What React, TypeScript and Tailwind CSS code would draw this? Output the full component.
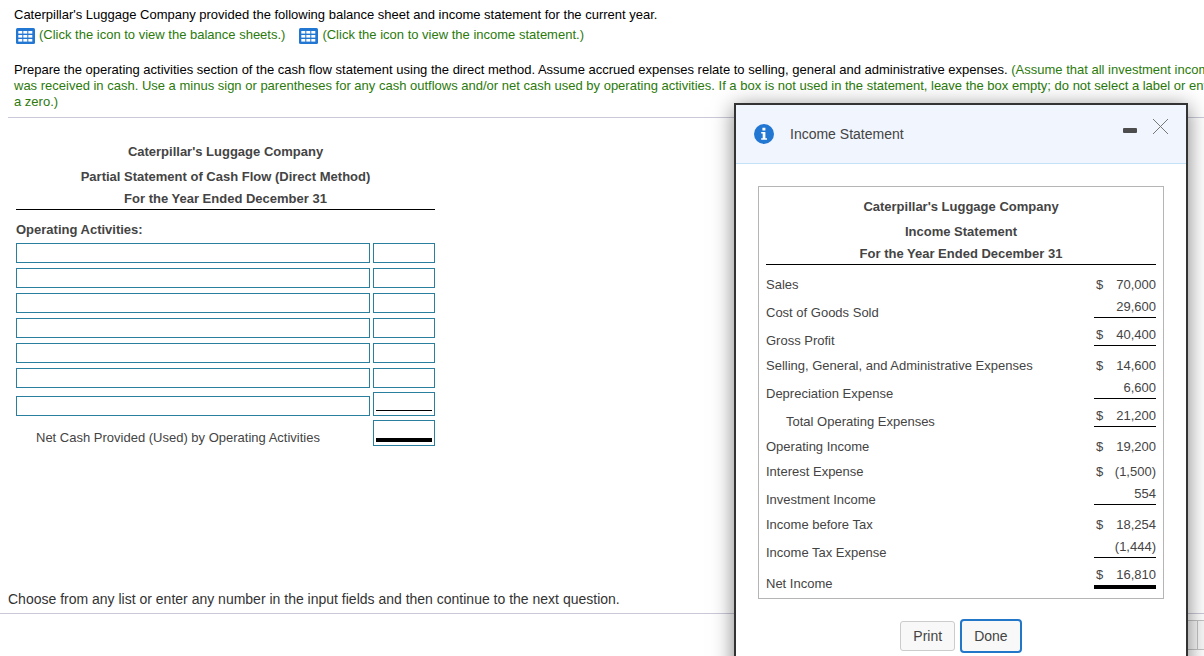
import React from "react";
import clsx from "clsx";

type Rule = "none" | "single" | "double";

type StatementLine = {
  label: string;
  amount: string;
  dollar?: boolean;
  indent?: boolean;
  rule?: Rule;
};

const incomeStatement: StatementLine[] = [
  { label: "Sales", amount: "70,000", dollar: true },
  { label: "Cost of Goods Sold", amount: "29,600", rule: "single" },
  { label: "Gross Profit", amount: "40,400", dollar: true, rule: "single" },
  {
    label: "Selling, General, and Administrative Expenses",
    amount: "14,600",
    dollar: true,
  },
  { label: "Depreciation Expense", amount: "6,600", rule: "single" },
  {
    label: "Total Operating Expenses",
    amount: "21,200",
    dollar: true,
    indent: true,
    rule: "single",
  },
  { label: "Operating Income", amount: "19,200", dollar: true },
  { label: "Interest Expense", amount: "(1,500)", dollar: true },
  { label: "Investment Income", amount: "554", rule: "single" },
  { label: "Income before Tax", amount: "18,254", dollar: true },
  { label: "Income Tax Expense", amount: "(1,444)", rule: "single" },
  { label: "Net Income", amount: "16,810", dollar: true, rule: "double" },
];

const SheetIcon = () => (
  <svg width="19" height="16" viewBox="0 0 19 16" aria-hidden="true">
    <rect width="19" height="16" rx="1.5" fill="#2277d3" />
    <g fill="#fff">
      {[3, 7, 11].map((y) =>
        [2, 7, 12].map((x) => (
          <rect key={`${x}-${y}`} x={x + 0.3} y={y} width="4" height="2.6" />
        ))
      )}
    </g>
  </svg>
);

const InfoIcon = () => (
  <svg width="20" height="20" viewBox="0 0 20 20" aria-hidden="true">
    <circle cx="10" cy="10" r="10" fill="#2277d3" />
    <path
      d="M8.4 3.8h3v2.6h-3zM7.2 8h4.2v6.2h1.6v1.6H7.2v-1.6h1.5V9.6H7.2z"
      fill="#fff"
    />
  </svg>
);

const PopupLink = ({ children }: { children: React.ReactNode }) => (
  <a href="#" className="flex items-start gap-1 text-[#2b7a0b]">
    <span className="pt-px">
      <SheetIcon />
    </span>
    {children}
  </a>
);

const StatementHeading = ({ lines }: { lines: string[] }) => (
  <thead>
    {lines.map((line, index) => (
      <tr key={line}>
        <th colSpan={2} className="p-0 text-center font-bold">
          {index < lines.length - 1 ? (
            <div className="leading-[25px]">{line}</div>
          ) : (
            <div className="mb-[7px] border-b border-black leading-5">
              {line}
            </div>
          )}
        </th>
      </tr>
    ))}
  </thead>
);

const AnswerTable = () => (
  <table className="w-[419px] border-collapse text-[13px] text-[#444]">
    <StatementHeading
      lines={[
        "Caterpillar's Luggage Company",
        "Partial Statement of Cash Flow (Direct Method)",
        "For the Year Ended December 31",
      ]}
    />
    <tbody>
      <tr>
        <th colSpan={2} className="p-0 pb-px text-left leading-[25px]">
          Operating Activities:
        </th>
      </tr>
      {[1, 2, 3, 4, 5, 6].map((row) => (
        <tr key={row}>
          <td className="p-0 pr-[3px] pb-[5px]">
            <input
              aria-label={`Label ${row}`}
              className="block h-5 w-full border border-[#2a7f9e] px-1"
            />
          </td>
          <td className="w-[62px] p-0 pb-[5px]">
            <input
              aria-label={`Amount ${row}`}
              className="block h-5 w-full border border-[#2a7f9e] px-1 text-right"
            />
          </td>
        </tr>
      ))}
      <tr>
        <td className="p-0 pr-[3px] pb-1 align-bottom">
          <input
            aria-label="Label 7"
            className="block h-5 w-full border border-[#2a7f9e] px-1"
          />
        </td>
        <td className="p-0 pb-1">
          <div className="-mt-px h-6 border border-[#2a7f9e] px-[2px]">
            <input
              aria-label="Amount 7"
              className="block h-[18px] w-full border-b border-black text-right"
            />
          </div>
        </td>
      </tr>
      <tr>
        <td className="p-0 pl-5 leading-4 align-bottom">
          <label htmlFor="net-cash" className="block">
            Net Cash Provided (Used) by Operating Activities
          </label>
        </td>
        <td className="p-0">
          <div className="h-[26px] border border-[#2a7f9e] px-[2px]">
            <input
              id="net-cash"
              className="block h-[21px] w-full border-b-4 border-black text-right"
            />
          </div>
        </td>
      </tr>
    </tbody>
  </table>
);

const StatementRow = ({ label, amount, dollar, indent, rule }: StatementLine) => (
  <tr>
    <td className={clsx("p-0 align-bottom leading-[25px]", indent && "pl-5")}>
      {label}
    </td>
    <td className="w-[62px] p-0 align-top">
      <div
        className={clsx(
          "flex justify-between pl-[2px]",
          !rule && "leading-[25px]",
          rule === "single" && "mb-[7px] border-b border-black leading-5",
          rule === "double" && "mb-[7px] border-b-4 border-black leading-5"
        )}
      >
        <span>{dollar && "$"}</span>
        <span>{amount}</span>
      </div>
    </td>
  </tr>
);

const IncomeDialog = () => (
  <div
    role="dialog"
    aria-labelledby="dialog-title"
    className="absolute top-[103px] right-4 w-[454px] border-2 border-[#333] bg-white text-[#444] shadow-[0_4px_20px_rgba(0,0,0,0.5)]"
  >
    <header className="flex h-[59px] items-center border-b border-[#c3e2f7] bg-[#f1f5fd] px-[18px]">
      <InfoIcon />
      <h2 id="dialog-title" className="flex-1 pl-4 text-sm">
        Income Statement
      </h2>
      <div className="flex gap-4 pb-4">
        <button aria-label="Minimize" className="flex items-end pb-px">
          <span className="block h-[5px] w-[14px] rounded-[1px] bg-[#4d4d4d]" />
        </button>
        <button aria-label="Close">
          <svg width="15" height="15" viewBox="0 0 15 15" className="block">
            <path d="M0 0L15 15M15 0L0 15" stroke="#777" strokeWidth="1" />
          </svg>
        </button>
      </div>
    </header>
    <div className="px-[22px] pt-[22px] pb-5">
      <div className="border border-[#b5b5b5] px-[7px] pt-[7px] pb-[2px]">
        <table className="w-full border-collapse text-[13px]">
          <StatementHeading
            lines={[
              "Caterpillar's Luggage Company",
              "Income Statement",
              "For the Year Ended December 31",
            ]}
          />
          <tbody>
            {incomeStatement.map((line) => (
              <StatementRow key={line.label} {...line} />
            ))}
          </tbody>
        </table>
      </div>
      <div className="mt-5 flex items-center justify-center gap-[5px] text-sm">
        <button className="h-[30px] rounded-[3px] border border-[#ccc] bg-[#f8f8f8] px-3">
          Print
        </button>
        <button className="h-[34px] rounded-[4px] border-2 border-[#2277c9] bg-[#f8f8f8] px-3">
          Done
        </button>
      </div>
    </div>
  </div>
);

export default function App() {
  return (
    <div className="relative flex h-screen flex-col overflow-hidden bg-white font-['Liberation_Sans',Arial,sans-serif]">
      <section className="px-[14px] pt-[7px] text-[13px] leading-4 text-black">
        <p>
          Caterpillar's Luggage Company provided the following balance sheet and
          income statement for the current year.
        </p>
        <div className="mt-1 flex gap-[14px] pl-[2px]">
          <PopupLink>(Click the icon to view the balance sheets.)</PopupLink>
          <PopupLink>(Click the icon to view the income statement.)</PopupLink>
        </div>
        <p className="mt-[18px] whitespace-nowrap">
          Prepare the operating activities section of the cash flow statement
          using the direct method. Assume accrued expenses relate to selling,
          general and administrative expenses.{" "}
          <span className="text-[#2b7a0b]">
            (Assume that all investment income
            <br />
            was received in cash. Use a minus sign or parentheses for any cash
            outflows and/or net cash used by operating activities. If a box is
            not used in the statement, leave the box empty; do not select a
            label or enter
            <br />a zero.)
          </span>
        </p>
      </section>

      <main className="mt-[7px] ml-2 flex-1 border-t border-[#c9c9d9] pt-[21px] pl-2">
        <AnswerTable />
      </main>

      <p className="px-2 pb-1 text-sm text-[#333]">
        Choose from any list or enter any number in the input fields and then
        continue to the next question.
      </p>
      <footer className="flex h-[43px] justify-end border-t border-[#c9c9d9] pt-[6px]">
        <button
          aria-label="Check answer"
          className="h-[30px] w-24 border border-[#c4c4c4] bg-[#f8f8f8]"
        />
        <button
          aria-label="Next"
          className="h-[30px] w-[6px] border-y border-[#c4c4c4] bg-[#f8f8f8]"
        />
      </footer>

      <IncomeDialog />
    </div>
  );
}
